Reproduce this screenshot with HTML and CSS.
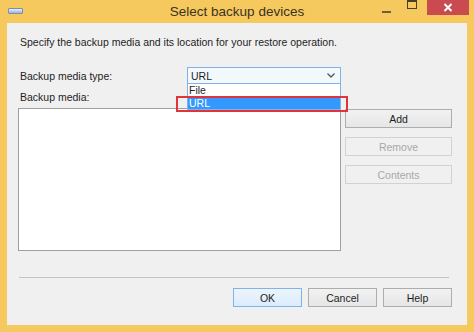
FILE: index.html
```html
<!DOCTYPE html>
<html lang="en">
<head>
  <meta charset="UTF-8">
  <title>Select backup devices</title>
  <link rel="stylesheet" href="styles.css">
</head>
<body>

<div class="window">
  <div class="titlebar">
    <div class="app-icon"></div>
    <div class="title">Select backup devices</div>
    <div class="controls">
      <div class="ctl min"><span></span></div>
      <div class="ctl max"><span></span></div>
      <div class="ctl close">
        <svg width="10" height="9" viewBox="0 0 10 9">
          <path d="M1.5 1 L8.5 8 M8.5 1 L1.5 8" stroke="#fff" stroke-width="2" fill="none"/>
        </svg>
      </div>
    </div>
  </div>

  <div class="client">
    <div class="intro">Specify the backup media and its location for your restore operation.</div>

    <div class="type-row">
      <label class="label">Backup media type:</label>
      <div class="combo">
        <span class="combo-value">URL</span>
        <svg class="chevron" width="8" height="5" viewBox="0 0 8 5">
          <path d="M0.5 0.5 L4 4 L7.5 0.5" stroke="#555" stroke-width="1.3" fill="none"/>
        </svg>
        <!-- open dropdown -->
        <ul class="dropdown">
          <li>File</li>
          <li class="selected">URL</li>
        </ul>
        <div class="highlight-box"></div>
      </div>
    </div>

    <div class="label media-label">Backup media:</div>

    <div class="media-area">
      <div class="listbox"></div>
      <div class="side-buttons">
        <button class="btn">Add</button>
        <button class="btn" disabled>Remove</button>
        <button class="btn" disabled>Contents</button>
      </div>
    </div>

    <div class="separator"></div>

    <div class="footer">
      <button class="btn default">OK</button>
      <button class="btn">Cancel</button>
      <button class="btn">Help</button>
    </div>
  </div>
</div>

</body>
</html>
```

FILE: styles.css
```css
body {
  margin: 0;
  padding: 0;
  font-family: "Liberation Sans", Arial, sans-serif;
  font-size: 10.5px;
  color: #1e1e1e;
  background: #f6c95f;
}

.window {
  width: 474px;
  height: 332px;
  background: #f6c95f;
  display: flex;
  flex-direction: column;
}

/* Title bar */
.titlebar {
  height: 23px;
  display: flex;
  align-items: flex-start;
}

.app-icon {
  width: 13px;
  height: 4px;
  margin: 8px 0 0 8px;
  border-radius: 1px;
  background: linear-gradient(#e8eef8, #9fb3d6);
  border: 1px solid #7d8fb0;
}

.title {
  flex: 1;
  text-align: center;
  font-size: 13.5px;
  color: #3a3320;
  padding-top: 4px;
  padding-left: 78px;
}

.controls {
  display: flex;
  margin-right: 5px;
}

.ctl {
  width: 26px;
  height: 15px;
  display: flex;
  justify-content: center;
  align-items: center;
}

.min span {
  width: 9px;
  height: 2px;
  background: #6e5f34;
  margin-top: 8px;
}

.max span {
  width: 8px;
  height: 6px;
  border: 1px solid #4a3f22;
  border-top-width: 2px;
  margin-top: -6px;
}

.close {
  width: 42px;
  background: #c94a4f;
  margin-left: 2px;
}

/* Client area */
.client {
  flex: 1;
  margin: 0 7px 7px 7px;
  background: #f0f0f0;
  padding: 13px 0 0 0;
}

.intro {
  margin-left: 13px;
  height: 13px;
}

.type-row {
  display: flex;
  align-items: center;
  margin-top: 18px;
  height: 17px;
}

.label {
  width: 167px;
  margin-left: 13px;
}

.combo {
  position: relative;
  width: 152px;
  height: 15px;
  border: 1px solid #7eb4ea;
  background: #f3f8fd;
  display: flex;
  align-items: center;
}

.combo-value {
  margin-left: 3px;
  flex: 1;
}

.chevron {
  margin-right: 5px;
}

.dropdown {
  position: absolute;
  top: 16px;
  left: -1px;
  width: 152px;
  margin: 0;
  padding: 0;
  list-style: none;
  background: #fff;
  border: 1px solid #7eb4ea;
  border-top: none;
  z-index: 2;
}

.dropdown li {
  height: 12px;
  line-height: 12px;
  padding-left: 1px;
}

.dropdown li.selected {
  background: #3399ff;
  color: #fff;
  margin-top: 1px;
}

.highlight-box {
  position: absolute;
  top: 28px;
  left: -12px;
  width: 168px;
  height: 12px;
  border: 2px solid #e0333b;
  z-index: 3;
}

.media-label {
  margin-top: 7px;
  height: 13px;
}

.media-area {
  display: flex;
  margin-top: 4px;
}

.listbox {
  width: 321px;
  height: 141px;
  margin-left: 11px;
  background: #fff;
  border: 1px solid #a0a0a0;
}

.side-buttons {
  display: flex;
  flex-direction: column;
  gap: 9px;
  margin-left: 4px;
  margin-top: 1px;
}

.btn {
  font-family: "Liberation Sans", Arial, sans-serif;
  font-size: 10.5px;
  color: #1e1e1e;
  width: 107px;
  height: 19px;
  padding: 0;
  background: linear-gradient(#f2f2f2, #e6e6e6);
  border: 1px solid #adadad;
  border-radius: 0;
}

.btn:disabled {
  color: #a8a8a8;
  border-color: #d2d2d2;
  background: #f0f0f0;
}

.separator {
  margin: 26px 0 0 12px;
  width: 430px;
  height: 1px;
  background: #c4c4c4;
}

.footer {
  display: flex;
  justify-content: flex-end;
  gap: 6px;
  margin: 10px 15px 0 0;
}

.footer .btn {
  width: 69px;
}

.btn.default {
  border-color: #7eb4ea;
  background: linear-gradient(#ecf4fc, #dcecfc);
}
```
